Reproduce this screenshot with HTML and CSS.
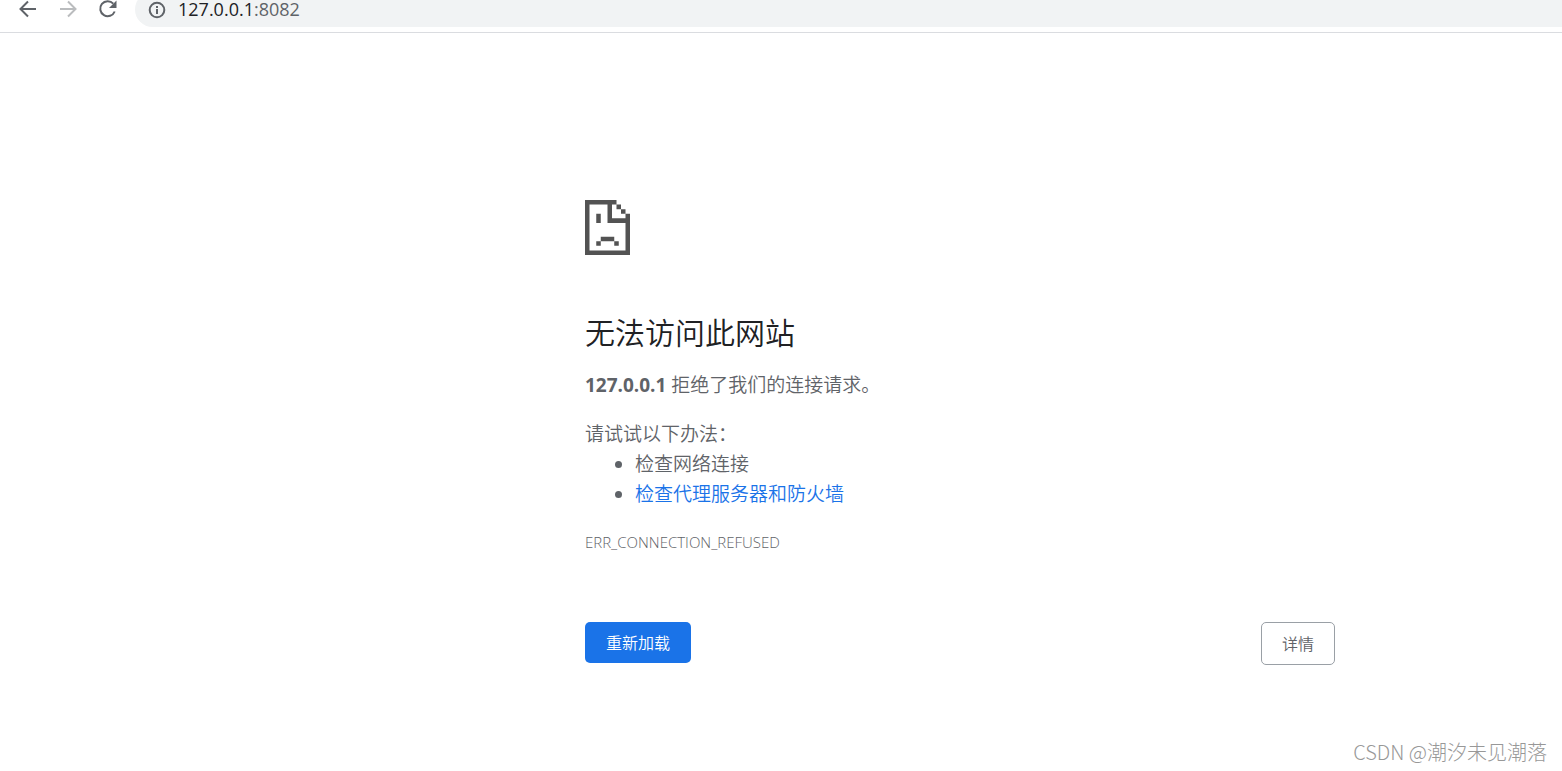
FILE: index.html
```html
<!DOCTYPE html>
<html lang="zh-CN">
<head>
<meta charset="utf-8">
<title>127.0.0.1</title>
<link rel="stylesheet" href="styles.css">
</head>
<body>
<header class="toolbar">
  <nav class="nav">
    <button class="nav-button" type="button" aria-label="后退">
      <svg width="20" height="20" viewBox="0 0 20 20" fill="none" stroke="currentColor" stroke-width="2"><path d="M18 10H3M10 2.500L2.500 10l7.500 7.500"/></svg>
    </button>
    <button class="nav-button nav-button-off" type="button" aria-label="前进" disabled>
      <svg width="20" height="20" viewBox="0 0 20 20" fill="none" stroke="currentColor" stroke-width="2"><path d="M2 10h15M10 2.500l7.500 7.500-7.500 7.500"/></svg>
    </button>
    <button class="nav-button" type="button" aria-label="重新加载此页">
      <svg width="20" height="20" viewBox="0 0 20 20"><path d="M16.700 12.500A7.500 7.500 0 1 1 15.300 4.700" fill="none" stroke="currentColor" stroke-width="2"/><path d="M18.500 1.500v7.500H11z" fill="currentColor"/></svg>
    </button>
  </nav>
  <div class="omnibox">
    <svg class="info" width="18" height="18" viewBox="0 0 18 18"><circle cx="9" cy="9" r="7.300" fill="none" stroke="currentColor" stroke-width="2"/><path d="M8 8h2v5H8zM8 5h2v2H8z" fill="currentColor"/></svg>
    <span class="url" role="textbox" aria-label="地址栏" tabindex="0">127.0.0.1<span class="port">:8082</span></span>
  </div>
</header>
<main class="page">
  <svg class="sad-page" width="45" height="55" viewBox="0 0 20 24" preserveAspectRatio="none" aria-hidden="true"><path fill="currentColor" d="M0 0h14v2h2v2h2v2h2v18H0zM2 2v20h16V10h-8V2zM12 2v6h6V6h-2V4h-2V2zM5 6h2v4H5zM7 16h6v2H7zM5 18h2v2H5zM13 18h2v2h-2z" fill-rule="evenodd"/></svg>
  <h1 class="title">无法访问此网站</h1>
  <p class="summary"><strong>127.0.0.1</strong> 拒绝了我们的连接请求。</p>
  <p class="hint">请试试以下办法：</p>
  <ul class="suggestions">
    <li>检查网络连接</li>
    <li><a class="link" href="#">检查代理服务器和防火墙</a></li>
  </ul>
  <p class="code">ERR_CONNECTION_REFUSED</p>
  <div class="actions">
    <button class="button button-primary" type="button">重新加载</button>
    <button class="button button-outline" type="button">详情</button>
  </div>
</main>
<footer class="watermark">CSDN @潮汐未见潮落</footer>
</body>
</html>
```
FILE: styles.css
```css
* {
  box-sizing: border-box;
}

body {
  margin: 0;
  min-height: 100vh;
  display: flex;
  flex-direction: column;
  background: #fff;
  color: #5f6368;
  font-family: "Open Sans", "Noto Sans CJK SC", sans-serif;
  font-size: 19px;
  line-height: 30px;
}

.toolbar {
  display: flex;
  align-items: flex-end;
  height: 33px;
  padding: 0 0 5px 18px;
  overflow: hidden;
  border-bottom: 1px solid #dadce0;
}

.nav {
  display: flex;
  gap: 20px;
  padding: 0 17px 8px 0;
}

.nav-button {
  display: flex;
  padding: 0;
  border: 0;
  background: none;
  color: #5f6368;
}

.nav-button-off {
  color: #babcbe;
}

.omnibox {
  flex: 1;
  display: flex;
  align-items: center;
  gap: 12px;
  height: 35px;
  padding-left: 13px;
  border-radius: 18px 0 0 18px;
  background: #f1f3f4;
}

.url {
  padding-bottom: 2px;
  color: #202124;
  font-family: "Open Sans", sans-serif;
  font-size: 18px;
  line-height: 18px;
}

.port {
  color: #5f6368;
}

.page {
  flex: 1;
  padding: 167px 227px 0 37.45%;
}

.sad-page {
  display: block;
  color: #535353;
}

.title {
  margin: 56px 0 15px;
  color: #202124;
  font-size: 30px;
  font-weight: 350;
  line-height: 44px;
}

.summary,
.hint,
.suggestions,
.code {
  margin: 0;
  font-weight: 350;
}

.summary {
  margin-bottom: 19px;
}

.summary strong {
  font-weight: 700;
}

.suggestions {
  padding-left: 50px;
}

.link {
  color: #1a73e8;
  text-decoration: none;
}

.code {
  margin-top: 18px;
  font-size: 15px;
  font-weight: 300;
}

.actions {
  display: flex;
  justify-content: space-between;
  align-items: flex-start;
  margin-top: 65px;
}

.button {
  padding: 9px 20px 7px;
  border: 0;
  border-radius: 5px;
  font: inherit;
  font-size: 16px;
  font-weight: 350;
  line-height: 25px;
}

.button-primary {
  padding: 9px 21px 7px;
  background: #1a73e8;
  color: #fff;
}

.button-outline {
  border: 1px solid #9aa0a6;
  background: #fff;
  color: #5f6368;
}

.watermark {
  padding: 0 15px 4px;
  color: #989898;
  font-family: "Noto Sans CJK SC", sans-serif;
  font-size: 20px;
  font-weight: 300;
  text-align: right;
}
```
